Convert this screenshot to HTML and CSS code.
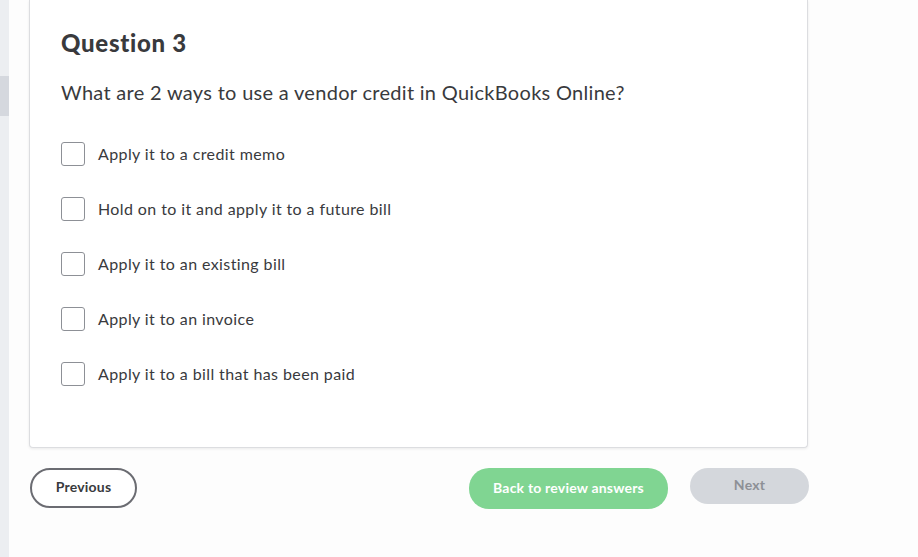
FILE: index.html
```html
<!DOCTYPE html>
<html>
<head>
<meta charset="utf-8">
<link rel="stylesheet" href="styles.css">
</head>
<body>
<div class="layout">
  <aside class="rail">
    <div class="rail-item"></div>
  </aside>
  <main class="main">
    <section class="card">
      <h2 class="title">Question 3</h2>
      <p class="question">What are 2 ways to use a vendor credit in QuickBooks Online?</p>
      <ul class="options">
        <li class="option"><span class="box"></span><span>Apply it to a credit memo</span></li>
        <li class="option"><span class="box"></span><span>Hold on to it and apply it to a future bill</span></li>
        <li class="option"><span class="box"></span><span>Apply it to an existing bill</span></li>
        <li class="option"><span class="box"></span><span>Apply it to an invoice</span></li>
        <li class="option"><span class="box"></span><span>Apply it to a bill that has been paid</span></li>
      </ul>
    </section>
    <div class="actions">
      <button class="btn btn-outline">Previous</button>
      <div class="right">
        <button class="btn btn-green">Back to review answers</button>
        <button class="btn btn-grey">Next</button>
      </div>
    </div>
  </main>
</div>
</body>
</html>
```

FILE: styles.css
```css
html, body {
  margin: 0;
  padding: 0;
  background: #fdfdfd;
  font-family: "Lato", "Open Sans", sans-serif;
  color: #393a3d;
}
.layout {
  display: flex;
  height: 557px;
  overflow: hidden;
}
.rail {
  width: 9px;
  background: #eceef1;
  padding-top: 76px;
  box-sizing: border-box;
}
.rail-item {
  height: 40px;
  background: #d5d8de;
}
.main {
  padding-left: 20px;
  width: 780px;
}
.card {
  width: 779px;
  box-sizing: border-box;
  background: #fff;
  border: 1px solid #dcdde0;
  border-top: none;
  border-radius: 0 0 4px 4px;
  box-shadow: 0 1px 3px rgba(0,0,0,0.08);
  padding: 28px 31px 61px;
}
.title {
  margin: 0;
  font-size: 24px;
  line-height: 30px;
  font-weight: 900;
  letter-spacing: 0.7px;
  color: #393a3d;
}
.question {
  margin: 21px 0 0;
  font-size: 20px;
  line-height: 26px;
  font-weight: 400;
  letter-spacing: 0.3px;
}
.options {
  list-style: none;
  margin: 37px 0 0;
  padding: 0;
  display: flex;
  flex-direction: column;
  gap: 31px;
}
.option {
  display: flex;
  align-items: center;
  gap: 13px;
  font-size: 16px;
  line-height: 24px;
  letter-spacing: 0.4px;
}
.box {
  width: 24px;
  height: 24px;
  box-sizing: border-box;
  border: 1px solid #8d9096;
  border-radius: 3px;
  background: #fff;
  flex: none;
}
.actions {
  display: flex;
  justify-content: space-between;
  align-items: flex-start;
  margin-top: 20px;
  width: 780px;
}
.right {
  display: flex;
  gap: 22px;
  align-items: flex-start;
}
.btn {
  font-family: "Lato", sans-serif;
  font-weight: 700;
  font-size: 14px;
  border-radius: 20px;
  cursor: pointer;
  box-sizing: border-box;
  letter-spacing: 0.2px;
  padding: 0 0 3px;
}
.btn-outline {
  width: 107px;
  height: 40px;
  margin-left: 1px;
  background: #fff;
  border: 2px solid #6b6c72;
  color: #393a3d;
}
.btn-green {
  width: 199px;
  height: 41px;
  background: #80d592;
  border: none;
  color: #fff;
}
.btn-grey {
  width: 119px;
  height: 36px;
  background: #d4d7dc;
  border: none;
  color: #8d9096;
}
```
